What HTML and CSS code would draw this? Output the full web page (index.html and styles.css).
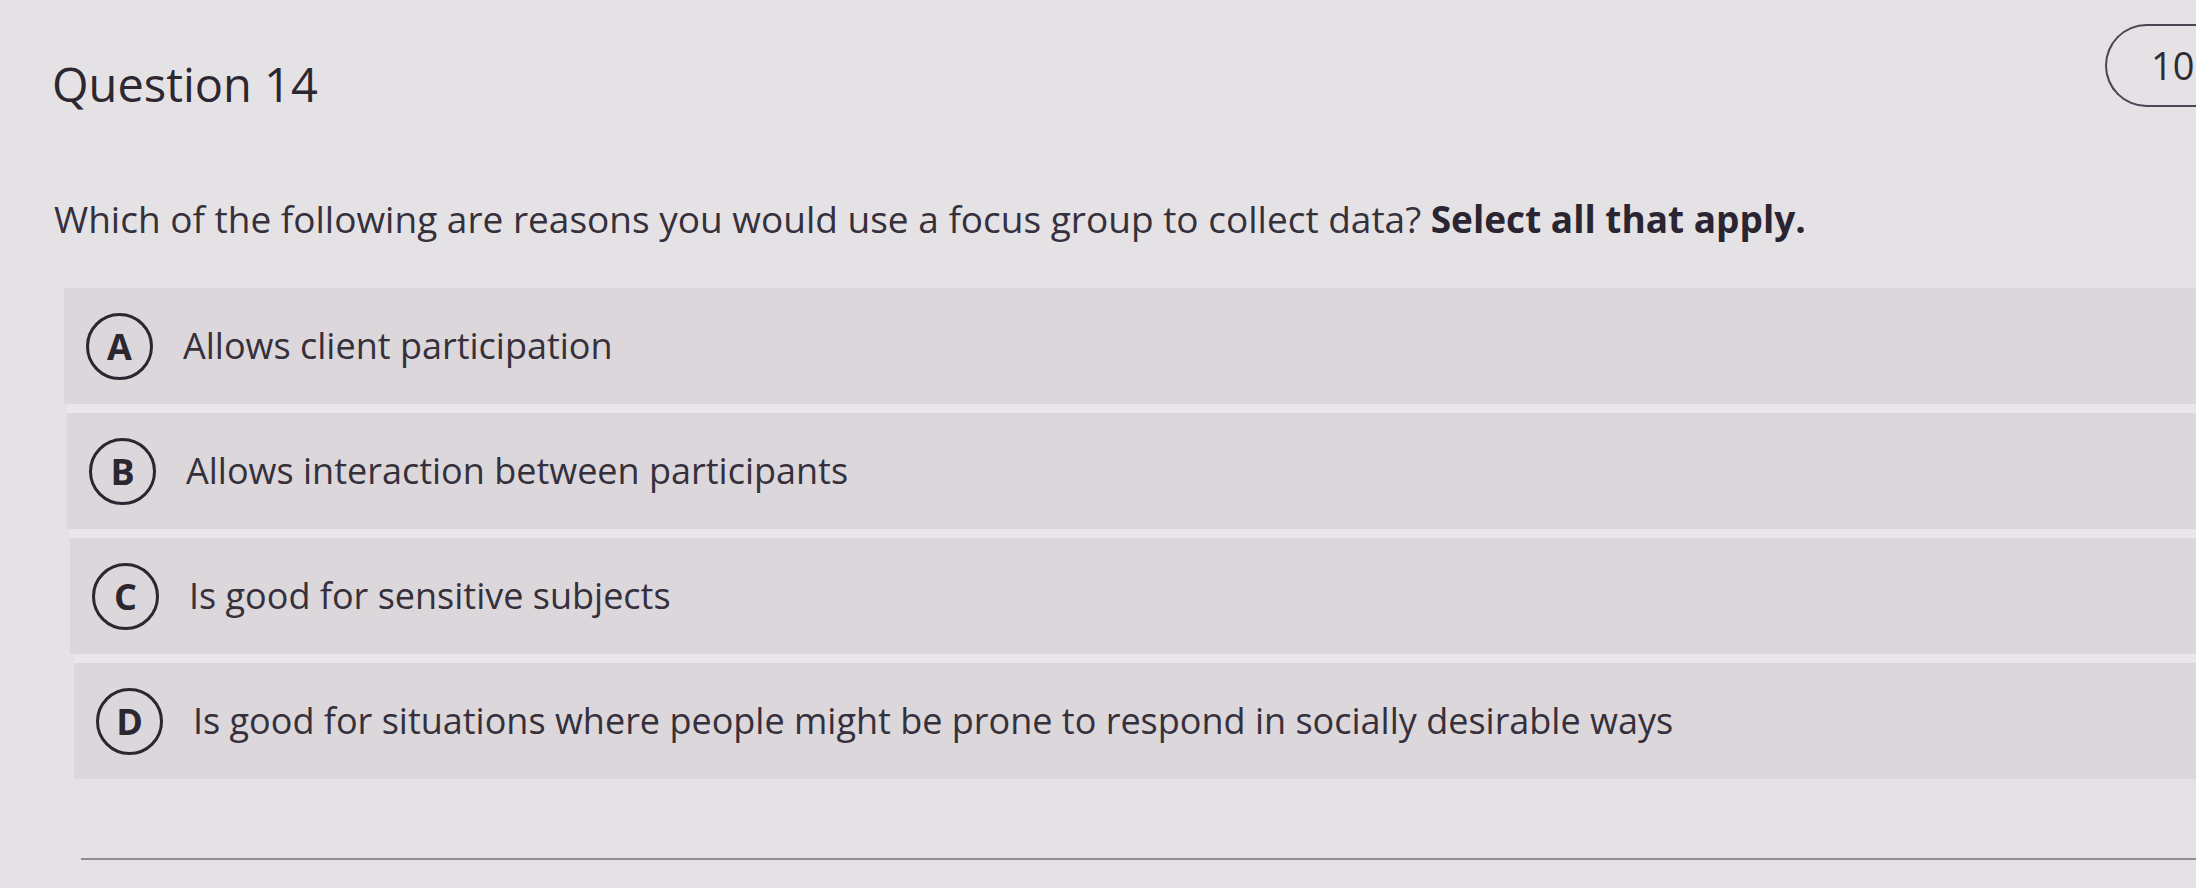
FILE: index.html
```html
<!DOCTYPE html>
<html lang="en">
<head>
<meta charset="utf-8">
<title>Question 14</title>
<link rel="stylesheet" href="styles.css">
</head>
<body>
<div class="page">
  <header class="header">
    <h1 class="title">Question 14</h1>
    <div class="badge">10</div>
  </header>
  <p class="question">Which of the following are reasons you would use a focus group to collect data? <strong>Select all that apply.</strong></p>
  <div class="options">
    <div class="option option-a"><span class="circle">A</span><span class="label">Allows client participation</span></div>
    <div class="option option-b"><span class="circle">B</span><span class="label">Allows interaction between participants</span></div>
    <div class="option option-c"><span class="circle">C</span><span class="label">Is good for sensitive subjects</span></div>
    <div class="option option-d"><span class="circle">D</span><span class="label">Is good for situations where people might be prone to respond in socially desirable ways</span></div>
  </div>
  <div class="rule"></div>
</div>
</body>
</html>
```
FILE: styles.css
```css
html, body {
  margin: 0;
  padding: 0;
}
body {
  width: 2196px;
  height: 888px;
  overflow: hidden;
  background: #e5e2e5;
  font-family: "Open Sans", "DejaVu Sans", sans-serif;
  color: #35303b;
}
.page {
  padding: 24px 0 0 52px;
}
.header {
  display: flex;
  justify-content: space-between;
  align-items: flex-start;
}
.title {
  margin: 32px 0 0;
  font-size: 47px;
  line-height: 56px;
  font-weight: 400;
  color: #2c2730;
}
.badge {
  box-sizing: border-box;
  width: 91px;
  height: 83px;
  border: 2px solid #4b4556;
  border-right: none;
  border-radius: 42px 0 0 42px;
  padding-left: 44px;
  font-size: 38px;
  line-height: 79px;
  color: #302c34;
  white-space: nowrap;
  overflow: hidden;
}
.question {
  margin: 85px 0 0 2px;
  font-size: 37px;
  line-height: 44px;
  color: #35303b;
}
.question strong {
  font-weight: 700;
  color: #2a2530;
}
.options {
  margin: 47px 0 0 12px;
  display: flex;
  flex-direction: column;
  gap: 9px;
}
.option {
  height: 116px;
  background: #dbd7da;
  display: flex;
  align-items: center;
  padding-left: 22px;
  gap: 30px;
  box-shadow: 0 -9px 0 #eae7ea;
}
.option-a {
  box-shadow: none;
}
.option-b {
  margin-left: 3px;
}
.option-c {
  margin-left: 6px;
}
.option-d {
  margin-left: 10px;
}
.circle {
  box-sizing: border-box;
  flex: 0 0 auto;
  width: 67px;
  height: 67px;
  border: 3px solid #2b2630;
  border-radius: 50%;
  display: flex;
  align-items: center;
  justify-content: center;
  font-size: 36px;
  font-weight: 700;
  color: #2b2630;
}
.label {
  font-size: 36px;
  line-height: 48px;
  color: #35303b;
}
.rule {
  margin: 79px 0 0 29px;
  height: 2px;
  background: #8f8b91;
}
```
